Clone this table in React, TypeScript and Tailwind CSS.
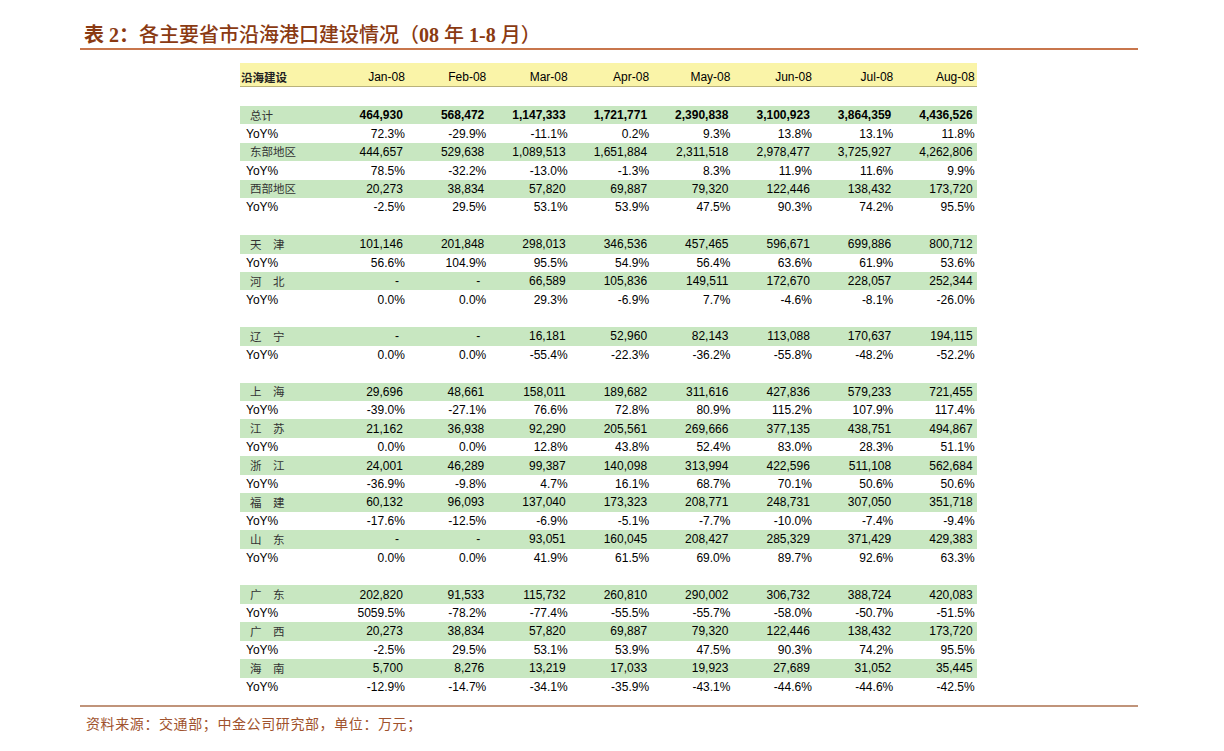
const months = ["Jan-08", "Feb-08", "Mar-08", "Apr-08", "May-08", "Jun-08", "Jul-08", "Aug-08"];

type Row =
  | { kind: "blank" }
  | { kind: "region"; label: string; values: string[]; bold?: boolean }
  | { kind: "yoy"; values: string[] };

const r = (label: string, s: string, bold?: boolean): Row => ({ kind: "region", label, values: s.split(" "), bold });
const y = (s: string): Row => ({ kind: "yoy", values: s.split(" ") });
const blank: Row = { kind: "blank" };

const rows: Row[] = [
  r("总计", "464,930 568,472 1,147,333 1,721,771 2,390,838 3,100,923 3,864,359 4,436,526", true),
  y("72.3% -29.9% -11.1% 0.2% 9.3% 13.8% 13.1% 11.8%"),
  r("东部地区", "444,657 529,638 1,089,513 1,651,884 2,311,518 2,978,477 3,725,927 4,262,806"),
  y("78.5% -32.2% -13.0% -1.3% 8.3% 11.9% 11.6% 9.9%"),
  r("西部地区", "20,273 38,834 57,820 69,887 79,320 122,446 138,432 173,720"),
  y("-2.5% 29.5% 53.1% 53.9% 47.5% 90.3% 74.2% 95.5%"),
  blank,
  r("天　津", "101,146 201,848 298,013 346,536 457,465 596,671 699,886 800,712"),
  y("56.6% 104.9% 95.5% 54.9% 56.4% 63.6% 61.9% 53.6%"),
  r("河　北", "- - 66,589 105,836 149,511 172,670 228,057 252,344"),
  y("0.0% 0.0% 29.3% -6.9% 7.7% -4.6% -8.1% -26.0%"),
  blank,
  r("辽　宁", "- - 16,181 52,960 82,143 113,088 170,637 194,115"),
  y("0.0% 0.0% -55.4% -22.3% -36.2% -55.8% -48.2% -52.2%"),
  blank,
  r("上　海", "29,696 48,661 158,011 189,682 311,616 427,836 579,233 721,455"),
  y("-39.0% -27.1% 76.6% 72.8% 80.9% 115.2% 107.9% 117.4%"),
  r("江　苏", "21,162 36,938 92,290 205,561 269,666 377,135 438,751 494,867"),
  y("0.0% 0.0% 12.8% 43.8% 52.4% 83.0% 28.3% 51.1%"),
  r("浙　江", "24,001 46,289 99,387 140,098 313,994 422,596 511,108 562,684"),
  y("-36.9% -9.8% 4.7% 16.1% 68.7% 70.1% 50.6% 50.6%"),
  r("福　建", "60,132 96,093 137,040 173,323 208,771 248,731 307,050 351,718"),
  y("-17.6% -12.5% -6.9% -5.1% -7.7% -10.0% -7.4% -9.4%"),
  r("山　东", "- - 93,051 160,045 208,427 285,329 371,429 429,383"),
  y("0.0% 0.0% 41.9% 61.5% 69.0% 89.7% 92.6% 63.3%"),
  blank,
  r("广　东", "202,820 91,533 115,732 260,810 290,002 306,732 388,724 420,083"),
  y("5059.5% -78.2% -77.4% -55.5% -55.7% -58.0% -50.7% -51.5%"),
  r("广　西", "20,273 38,834 57,820 69,887 79,320 122,446 138,432 173,720"),
  y("-2.5% 29.5% 53.1% 53.9% 47.5% 90.3% 74.2% 95.5%"),
  r("海　南", "5,700 8,276 13,219 17,033 19,923 27,689 31,052 35,445"),
  y("-12.9% -14.7% -34.1% -35.9% -43.1% -44.6% -44.6% -42.5%"),
];

const grid = "grid grid-cols-[85.5px_repeat(8,81.4px)] items-center";
const cjk = "font-['Noto_Sans_CJK_SC',sans-serif]";

const App = () => {
  return (
    <div className="w-[1224px] h-[751px] bg-white pl-[80px] pt-[23px] font-['Liberation_Sans',Arial,sans-serif] text-[12px] text-black">
      <div className="w-[1058px]">
        <div className="border-b-2 border-[#c8764c] pl-[4px] h-[27px] leading-[25px] text-[20px] text-[#8a3a12] font-['Liberation_Serif','Noto_Sans_CJK_SC',serif]">
          <span className="font-bold">表 2：</span>
          <span className="font-medium">各主要省市沿海港口建设情况（</span>
          <span className="font-bold">08 </span>
          <span className="font-medium">年 </span>
          <span className="font-bold">1-8 </span>
          <span className="font-medium">月）</span>
        </div>

        <div className="ml-[160px] mt-[13px] w-[737px]">
          <div className={`${grid} h-[24px] bg-[#faf4a8] border-b border-[#b9b27a] items-end`}>
            <div className={`${cjk} pl-[1px] text-[11.5px] font-bold text-[#222]`}>沿海建设</div>
            {months.map((m) => (
              <div key={m} className="text-right pr-[2px]">
                {m}
              </div>
            ))}
          </div>
          <div className="h-[19px]" />

          {rows.map((row, i) => {
            if (row.kind === "blank") return <div key={i} className="h-[18.45px]" />;
            if (row.kind === "yoy")
              return (
                <div key={i} className={`${grid} h-[18.45px]`}>
                  <div className="pl-[6px]">YoY%</div>
                  {row.values.map((v, j) => (
                    <div key={j} className="text-right pr-[2px]">
                      {v}
                    </div>
                  ))}
                </div>
              );
            return (
              <div key={i} className={`${grid} h-[18.45px] bg-[#c8e7c1] ${row.bold ? "font-bold" : ""}`}>
                <div className={`${cjk} pl-[10px] font-normal text-[11.5px] text-[#333]`}>{row.label}</div>
                {row.values.map((v, j) => (
                  <div key={j} className={`text-right ${v === "-" ? "pr-[8px]" : "pr-[4px]"}`}>
                    {v}
                  </div>
                ))}
              </div>
            );
          })}
        </div>

        <div className="mt-[9px] border-t-2 border-[#c0947a]" />
        <div className={`${cjk} mt-[6px] pl-[6px] text-[14px] leading-[20px] tracking-[0.6px] text-[#a0522d]`}>
          资料来源：交通部；中金公司研究部，单位：万元；
        </div>
      </div>
    </div>
  );
};

export default App;
